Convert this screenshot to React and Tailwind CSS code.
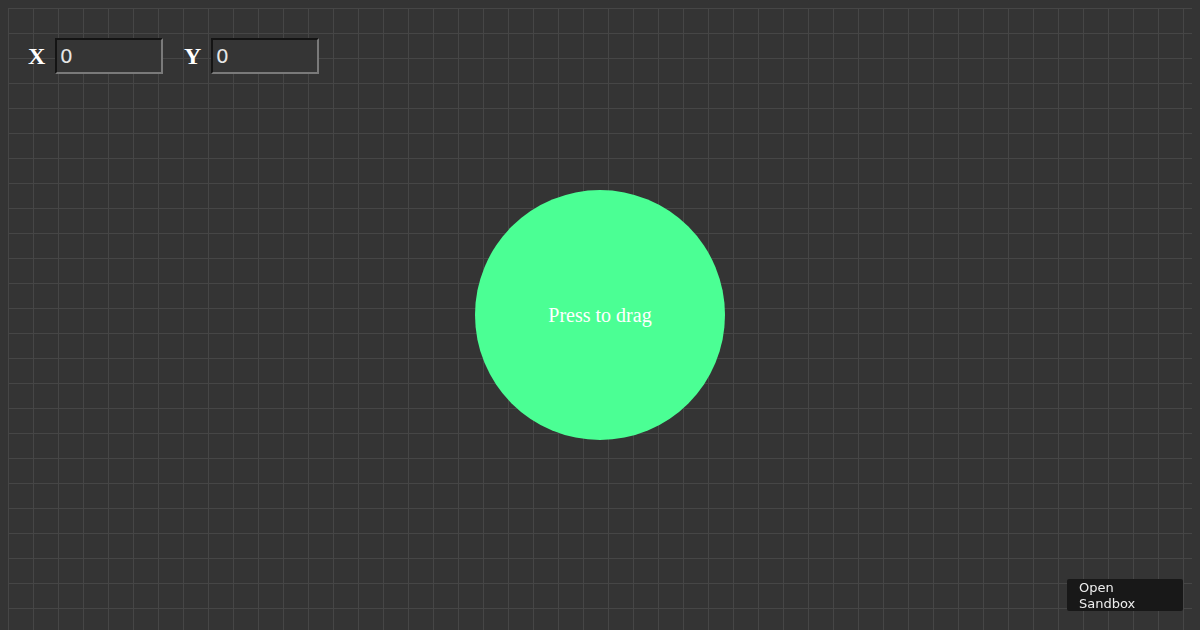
import React, { useState } from "react";

function Coord({ label, value, onChange }) {
  return (
    <label className="flex items-center gap-[10px]">
      <span className="w-[17px] text-[24px] font-bold leading-none text-white font-['Liberation_Serif',serif]">
        {label}
      </span>
      <input
        type="text"
        value={value}
        onChange={(e) => onChange(e.target.value)}
        className="h-[36px] w-[108px] border-2 border-t-[#141414] border-l-[#141414] border-b-[#7a7a7a] border-r-[#7a7a7a] bg-[#353535] pl-[3px] text-[20px] text-[#e6e6e6] outline-none font-['DejaVu_Sans',sans-serif]"
      />
    </label>
  );
}

export default function App() {
  const [x, setX] = useState("0");
  const [y, setY] = useState("0");

  return (
    <div className="h-[630px] w-full overflow-hidden bg-[#343434] px-2 pt-2">
      <div className="relative flex h-[640px] items-start justify-center bg-[#343434] bg-[linear-gradient(to_right,#464646_1px,transparent_1px),linear-gradient(to_bottom,#464646_1px,transparent_1px)] bg-[size:25px_25px]">
        <div className="absolute left-[20px] top-[30px] flex items-center gap-[21px]">
          <Coord label="X" value={x} onChange={setX} />
          <Coord label="Y" value={y} onChange={setY} />
        </div>

        <div className="mt-[182px] flex h-[250px] w-[250px] cursor-grab select-none items-center justify-center rounded-full bg-[#4bff94]">
          <span className="text-[20px] text-white font-['Liberation_Serif',serif]">
            Press to drag
          </span>
        </div>
      </div>

      <button className="fixed bottom-[19px] right-[17px] h-[32px] w-[116px] rounded-[2px] bg-[#181818] px-[12px] pt-[1px] text-left text-[13px] leading-[16px] text-[#eeeeee] font-['DejaVu_Sans',sans-serif]">
        Open
        <br />
        Sandbox
      </button>
    </div>
  );
}
